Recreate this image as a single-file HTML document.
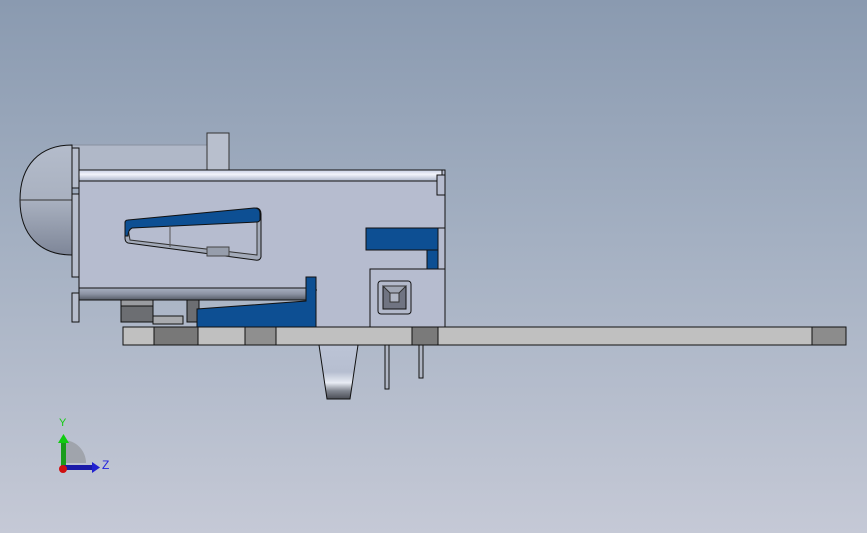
<!DOCTYPE html>
<html><head><style>
html,body{margin:0;padding:0;}
body{width:867px;height:533px;overflow:hidden;background:linear-gradient(#8a9ab0 0%,#a4b0c2 45%,#c5c9d6 100%);}
svg{display:block}
</style></head><body>
<svg width="867" height="533" viewBox="0 0 867 533" xmlns="http://www.w3.org/2000/svg">
<defs>
<linearGradient id="dome" x1="0" y1="0" x2="0" y2="1"><stop offset="0" stop-color="#b4bccb"/><stop offset="0.5" stop-color="#a9b1c0"/><stop offset="1" stop-color="#7e8698"/></linearGradient>
<linearGradient id="rail" x1="0" y1="0" x2="0" y2="1"><stop offset="0" stop-color="#c8d0e4"/><stop offset="0.4" stop-color="#f2f4fb"/><stop offset="1" stop-color="#aab3c8"/></linearGradient>
<linearGradient id="brail" x1="0" y1="0" x2="0" y2="1"><stop offset="0" stop-color="#a8b0c2"/><stop offset="0.5" stop-color="#8c93a3"/><stop offset="1" stop-color="#555b66"/></linearGradient>
<linearGradient id="fun" x1="0" y1="0" x2="0" y2="1"><stop offset="0" stop-color="#bcc4d6"/><stop offset="0.5" stop-color="#b6bed0"/><stop offset="0.7" stop-color="#e8ecf4"/><stop offset="0.85" stop-color="#80858f"/><stop offset="1" stop-color="#4a4d55"/></linearGradient>
</defs>
<g stroke="#111" stroke-width="1">
<rect x="72" y="145" width="140" height="25" fill="#b0b8c8" stroke="none"/>
<line x1="72" y1="145" x2="207" y2="145" stroke="#8890a0"/>
<rect x="207" y="133" width="22" height="37" fill="#b8bfcd" stroke="#333"/>
<path d="M72 145 C40 145 20 165 20 200 C20 235 40 255 72 255 Z" fill="url(#dome)"/>
<line x1="20" y1="200" x2="72" y2="200" stroke="#333"/>
<rect x="72" y="148" width="7" height="40" fill="#b6bdcc"/>
<rect x="72" y="194" width="7" height="83" fill="#b6bdcc"/>
<rect x="72" y="293" width="7" height="29" fill="#b6bdcc"/>
<rect x="121" y="300" width="32" height="22" fill="#6c6e72"/>
<rect x="121" y="300" width="32" height="6" fill="#9a9ca0"/>
<rect x="153" y="316" width="30" height="8" fill="#a8aaae"/>
<rect x="187" y="300" width="12" height="22" fill="#6c6e72"/>
<rect x="79" y="170" width="366" height="130" fill="#b6bccf"/>
<rect x="316" y="290" width="129" height="37" fill="#b6bccf"/>
<rect x="317" y="288" width="127" height="14" fill="#b6bccf" stroke="none"/>
<rect x="79" y="170" width="363" height="11" fill="url(#rail)"/>
<rect x="79" y="288" width="227" height="12" fill="url(#brail)"/>
<rect x="437" y="175" width="8" height="20" fill="#b6bccf"/>
<path d="M125 222 L257 208 Q261 209 261 214 L261 257 Q260 261 255 260 L128 243 Q125 242 125 238 Z" fill="#a3aab9"/>
<path d="M128 228 L130 226 L257 212 L257 255 L130 240 Z" fill="#b6bccf" stroke="#333"/>
<path d="M125 223 Q125 220 128 220 L254 208 Q260 208 260 213 L260 220 Q259 222 257 222 L132 228 Q128 230 128 236 L125 236 Z" fill="#0d4f93"/>
<line x1="170" y1="226" x2="170" y2="247" stroke="#555"/>
<rect x="207" y="247" width="22" height="9" fill="#979eac" stroke="#444"/>
<rect x="366" y="228" width="72" height="22" fill="#0d4f93"/>
<rect x="427" y="250" width="11" height="20" fill="#0d4f93"/>
<rect x="438" y="228" width="7" height="99" fill="#b6bccf"/>
<rect x="370" y="269" width="75" height="58" fill="#b6bccf"/>
<rect x="378" y="281" width="33" height="33" rx="3" fill="#b3b9cb"/>
<rect x="383" y="286" width="23" height="23" fill="#707482"/>
<path d="M383 286 L406 286 L399 293 L390 293 Z" fill="#a0a6b4" stroke="#333"/>
<rect x="390" y="293" width="9" height="9" fill="#b0b6c4" stroke="#333"/>
<path d="M306 277 L316 277 L316 327 L197 327 L197 309 L306 301 Z" fill="#0d4f93"/>
<rect x="123" y="327" width="723" height="18" fill="#c0c0c0"/>
<rect x="154" y="327" width="44" height="18" fill="#787878"/>
<rect x="245" y="327" width="31" height="18" fill="#8f8f8f"/>
<rect x="412" y="327" width="26" height="18" fill="#7a7a7a"/>
<rect x="812" y="327" width="34" height="18" fill="#8c8c8c"/>
<path d="M319 345 L358 345 L350 399 L327 399 Z" fill="url(#fun)"/>
<rect x="385" y="345" width="4" height="44" fill="#b0b6c4"/>
<rect x="419" y="345" width="4" height="33" fill="#b0b6c4"/>
</g>
<path d="M63 440 A23 23 0 0 1 86 463 L63 463 Z" fill="#a0a4ac"/>
<rect x="61" y="441" width="5" height="27" fill="#1a9c1a"/>
<polygon points="58,443 63.5,434 69,443" fill="#1c1"/>
<rect x="63" y="465" width="30" height="5" fill="#1a1aa8"/>
<polygon points="92,462 100,467.5 92,473" fill="#2222d0"/>
<circle cx="63" cy="469" r="4" fill="#d01010"/>
<text x="59" y="426" font-family="Liberation Sans, sans-serif" font-size="11" fill="#1c1">Y</text>
<text x="102" y="469" font-family="Liberation Sans, sans-serif" font-size="12" fill="#22d">Z</text>
</svg>
</body></html>
